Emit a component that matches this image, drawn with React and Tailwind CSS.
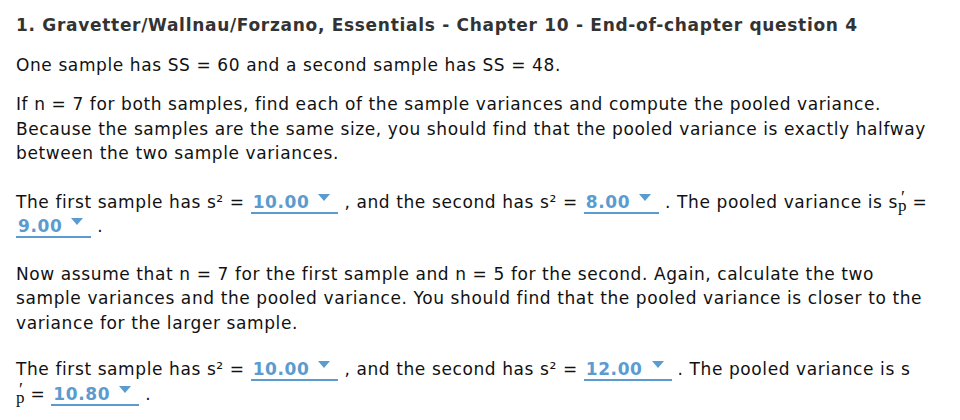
import React from "react";

const font = { fontFamily: '"DejaVu Sans", Verdana, sans-serif' };

function Drop({ value }) {
  return (
    <span className="inline-flex items-start border-b-2 border-[#5b9bd0] pl-[2px] pr-[8px] leading-[20px] align-baseline">
      <span className="font-bold text-[#5b9bd0]">{value}</span>
      <svg className="ml-[9px] mt-[2px]" width="12" height="7" viewBox="0 0 12 7">
        <polygon points="0,0 12,0 6,7" fill="#5b9bd0" />
      </svg>
    </span>
  );
}

function Sp() {
  return (
    <span className="relative inline-block align-[-3px] text-[17px] leading-none tracking-normal" style={{ fontFamily: '"Liberation Serif", serif' }}>
      <span className="absolute left-[3px] top-[-8px] text-[18px]">′</span>
      <span>p</span>
    </span>
  );
}

export default function App() {
  return (
    <div className="w-[960px] h-[420px] bg-white px-4 pt-[13px] text-[17px] tracking-[0.6px] leading-[24.5px] text-[#111]" style={font}>
      <h1 className="font-bold text-[#333] text-[17px] tracking-[0.7px]">
        1. Gravetter/Wallnau/Forzano, Essentials - Chapter 10 - End-of-chapter question 4
      </h1>
      <p className="mt-[15px]">One sample has SS = 60 and a second sample has SS = 48.</p>
      <p className="mt-[15px]">
        If n = 7 for both samples, find each of the sample variances and compute the pooled variance. Because the
        samples are the same size, you should find that the pooled variance is exactly halfway between the two sample
        variances.
      </p>
      <p className="mt-[24px]">
        The first sample has s² = <Drop value="10.00" /> , and the second has s² = <Drop value="8.00" /> . The pooled
        variance is s<span className="whitespace-nowrap"><Sp /> =</span> <Drop value="9.00" /> .
      </p>
      <p className="mt-[23px]">
        Now assume that n = 7 for the first sample and n = 5 for the second. Again, calculate the two sample variances
        and the pooled variance. You should find that the pooled variance is closer to the variance for the larger
        sample.
      </p>
      <p className="mt-[22px]">
        The first sample has s² = <Drop value="10.00" /> , and the second has s² = <Drop value="12.00" /> . The pooled
        variance is s<span className="whitespace-nowrap"><Sp /> = </span> <Drop value="10.80" /> .
      </p>
    </div>
  );
}
